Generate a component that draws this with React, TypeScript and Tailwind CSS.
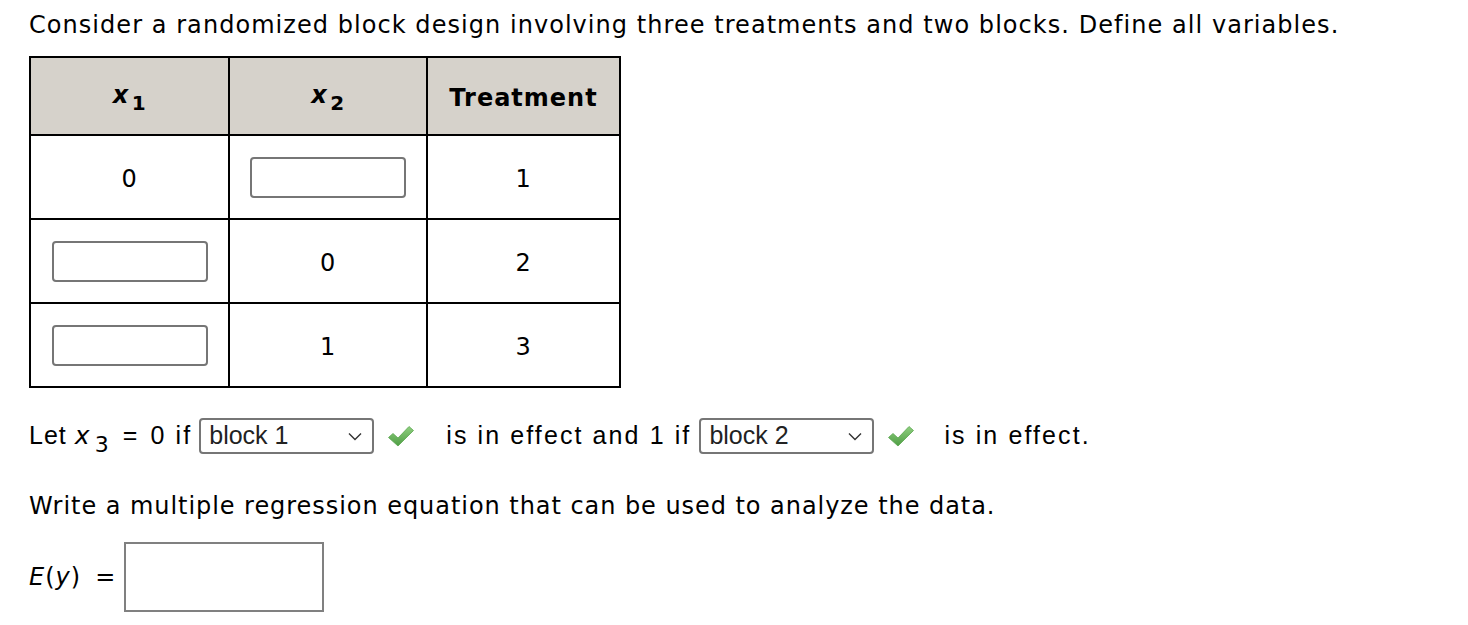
import React from "react";

const verdana = { fontFamily: '"DejaVu Sans", Verdana, sans-serif' };
const arial = { fontFamily: '"Liberation Sans", Arial, sans-serif' };

function Check() {
  return (
    <svg width="28" height="24" viewBox="0 0 28 24" className="shrink-0">
      <defs>
        <linearGradient id="g" x1="0" y1="0" x2="0" y2="1">
          <stop offset="0" stopColor="#8fcf7f" />
          <stop offset="1" stopColor="#4f9e45" />
        </linearGradient>
      </defs>
      <path
        d="M1.5 13.5 L6 9.5 L11 14 L22 2.5 L26.5 6.5 L11 22 Z"
        fill="url(#g)"
        stroke="#5aa64f"
        strokeWidth="0.8"
        strokeLinejoin="round"
      />
    </svg>
  );
}

function Select({ label }: { label: string }) {
  return (
    <div
      className="flex h-[36px] w-[175px] shrink-0 items-center justify-between rounded-[4px] border-2 border-[#767676] bg-white pl-[8px] pr-[10px] text-[25px] tracking-normal text-[#222]"
      style={arial}
    >
      <span>{label}</span>
      <svg width="14" height="9" viewBox="0 0 14 9">
        <path d="M1 1.5 L7 7.5 L13 1.5" fill="none" stroke="#333" strokeWidth="1.4" />
      </svg>
    </div>
  );
}

function Box() {
  return <div className="mx-auto h-[41px] w-[156px] rounded-[4px] border-2 border-[#767676] bg-white" />;
}

export default function App() {
  const cell = "border-2 border-black text-center align-middle";
  return (
    <div className="min-h-[625px] bg-white pl-[29px] pt-[10px] text-black" style={verdana}>
      <div className="text-[24px] leading-[30px] tracking-[1.05px]">
        Consider a randomized block design involving three treatments and two blocks. Define all variables.
      </div>
      <table className="mt-[16px] border-collapse text-[24px] tracking-[0.5px]" style={verdana}>
        <thead>
          <tr className="h-[78px] bg-[#d6d2cb]">
            <th className={`${cell} w-[199px] pt-[3px] font-bold`}>
              <span className="relative -top-[3px] italic">x</span>
              <span className="relative top-[4px] ml-[3px] text-[20px]">1</span>
            </th>
            <th className={`${cell} w-[198px] pt-[3px] font-bold`}>
              <span className="relative -top-[3px] italic">x</span>
              <span className="relative top-[4px] ml-[3px] text-[20px]">2</span>
            </th>
            <th className={`${cell} w-[193px] pt-[3px] font-bold tracking-[1px]`}>Treatment</th>
          </tr>
        </thead>
        <tbody>
          <tr className="h-[84px]">
            <td className={`${cell} pt-[3px]`}>0</td>
            <td className={cell}>
              <Box />
            </td>
            <td className={`${cell} pt-[3px]`}>1</td>
          </tr>
          <tr className="h-[84px]">
            <td className={cell}>
              <Box />
            </td>
            <td className={`${cell} pt-[3px]`}>0</td>
            <td className={`${cell} pt-[3px]`}>2</td>
          </tr>
          <tr className="h-[84px]">
            <td className={cell}>
              <Box />
            </td>
            <td className={`${cell} pt-[3px]`}>1</td>
            <td className={`${cell} pt-[3px]`}>3</td>
          </tr>
        </tbody>
      </table>

      <div className="mt-[28px] flex h-[40px] items-center text-[25px] tracking-[2.1px]" style={arial}>
        <span className="tracking-[1px]">Let</span>
        <span className="ml-[8px] italic" style={verdana}>
          x
        </span>
        <span className="relative top-[8px] ml-[3px] text-[22px]" style={verdana}>
          3
        </span>
        <span className="ml-[12px]">=</span>
        <span className="ml-[11px]">0 if</span>
        <span className="ml-[7px]">
          <Select label="block 1" />
        </span>
        <span className="ml-[13px]">
          <Check />
        </span>
        <span className="ml-[31px]">is in effect and 1 if</span>
        <span className="ml-[8px]">
          <Select label="block 2" />
        </span>
        <span className="ml-[13px]">
          <Check />
        </span>
        <span className="ml-[29px]">is in effect.</span>
      </div>

      <div className="mt-[35px] text-[24px] leading-[30px] tracking-[0.95px]">
        Write a multiple regression equation that can be used to analyze the data.
      </div>

      <div className="mt-[21px] flex items-center text-[24px] tracking-[1px]">
        <span className="italic">E</span>
        <span>(</span>
        <span className="italic">y</span>
        <span>)</span>
        <span className="ml-[14px]">=</span>
        <div className="ml-[8px] h-[70px] w-[200px] border-2 border-[#808080] bg-white" />
      </div>
    </div>
  );
}
